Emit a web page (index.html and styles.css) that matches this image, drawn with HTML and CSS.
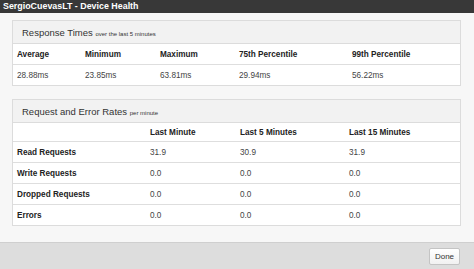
FILE: index.html
```html
<!DOCTYPE html>
<html>
<head>
<meta charset="utf-8">
<title>Device Health</title>
<link rel="stylesheet" href="styles.css">
</head>
<body>
<div class="window">
  <div class="titlebar">SergioCuevasLT - Device Health</div>
  <div class="content">
    <div class="panel">
      <div class="panel-heading">Response Times <small>over the last 5 minutes</small></div>
      <table class="grid grid-times">
        <colgroup><col class="c1"><col class="c2"><col class="c3"><col class="c4"><col></colgroup>
        <tr class="head"><th>Average</th><th>Minimum</th><th>Maximum</th><th>75th Percentile</th><th>99th Percentile</th></tr>
        <tr><td>28.88ms</td><td>23.85ms</td><td>63.81ms</td><td>29.94ms</td><td>56.22ms</td></tr>
      </table>
    </div>
    <div class="panel">
      <div class="panel-heading">Request and Error Rates <small>per minute</small></div>
      <table class="grid grid-rates">
        <colgroup><col class="r1"><col class="r2"><col class="r3"><col></colgroup>
        <tr class="head short"><th></th><th>Last Minute</th><th>Last 5 Minutes</th><th>Last 15 Minutes</th></tr>
        <tr><th>Read Requests</th><td>31.9</td><td>30.9</td><td>31.9</td></tr>
        <tr><th>Write Requests</th><td>0.0</td><td>0.0</td><td>0.0</td></tr>
        <tr><th>Dropped Requests</th><td>0.0</td><td>0.0</td><td>0.0</td></tr>
        <tr><th>Errors</th><td>0.0</td><td>0.0</td><td>0.0</td></tr>
      </table>
    </div>
  </div>
  <div class="footer"><button class="btn">Done</button></div>
</div>
</body>
</html>
```
FILE: styles.css
```css
html, body {
  margin: 0;
  padding: 0;
}
body {
  font-family: "Liberation Sans", Arial, sans-serif;
  color: #333;
  background: #f6f6f6;
}
.window {
  height: 269px;
  display: flex;
  flex-direction: column;
}
.titlebar {
  height: 13px;
  line-height: 13px;
  background: #383838;
  color: #fff;
  font-weight: bold;
  font-size: 8.9px;
  padding-left: 3px;
  white-space: nowrap;
}
.content {
  flex: 1;
  padding: 7px 13px 0 12px;
  display: flex;
  flex-direction: column;
  gap: 13px;
  background: #f7f7f7;
}
.panel {
  border: 1px solid #dcdcdc;
  background: #fff;
}
.panel-heading {
  height: 22px;
  line-height: 24px;
  background: #f2f2f2;
  border-bottom: 1px solid #dcdcdc;
  padding-left: 9px;
  font-size: 9.5px;
  color: #333;
  white-space: nowrap;
}
.panel-heading small {
  font-size: 6px;
  color: #333;
}
.grid {
  width: 100%;
  border-collapse: collapse;
  table-layout: fixed;
  font-size: 8.2px;
}
.grid th, .grid td {
  height: 20px;
  padding: 0 0 0 4px;
  text-align: left;
  border-top: 1px solid #dedede;
  white-space: nowrap;
  color: #333;
}
.grid th {
  font-weight: bold;
  color: #222;
}
.grid td {
  color: #444;
}
.grid tr:first-child th,
.grid tr:first-child td {
  border-top: none;
}
.grid tr.short th {
  height: 18px;
}
.grid-times .c1 { width: 68px; }
.grid-times .c2 { width: 75px; }
.grid-times .c3 { width: 79px; }
.grid-times .c4 { width: 113px; }
.grid-rates .r1 { width: 133px; }
.grid-rates .r2 { width: 90px; }
.grid-rates .r3 { width: 109px; }
.footer {
  height: 26px;
  background: #dddddd;
  border-top: 1px solid #cfcfcf;
  display: flex;
  align-items: center;
  justify-content: flex-end;
  padding-right: 14px;
}
.btn {
  width: 31px;
  height: 17px;
  padding: 0;
  font-family: "Liberation Sans", Arial, sans-serif;
  font-size: 8px;
  color: #333;
  background: linear-gradient(#ffffff, #f1f1f1);
  border: 1px solid #c4c4c4;
  border-radius: 2px;
}
```
